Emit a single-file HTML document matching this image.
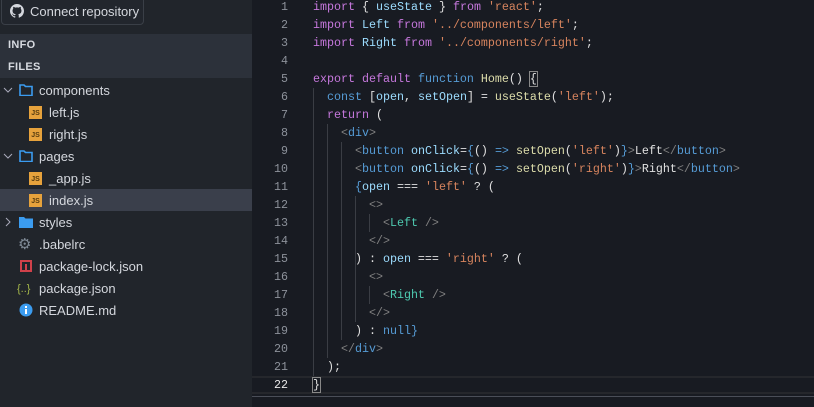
<!DOCTYPE html>
<html><head><meta charset="utf-8"><style>
*{margin:0;padding:0;box-sizing:border-box}
body{width:814px;height:407px;overflow:hidden;background:#181b22;font-family:"Liberation Sans",sans-serif;position:relative}
#side{position:absolute;left:0;top:0;width:252px;height:407px;background:#21252b}
.btn{position:absolute;left:1px;top:-4px;width:143px;height:29px;border:1px solid #3a3f47;border-radius:4px;background:#22262d;color:#d4d7dd;font-size:13px;line-height:29px;padding-left:28px}
.btn svg{position:absolute;left:8px;top:7px}
.hdr{position:absolute;left:0;width:252px;height:22px;background:#2c313a;color:#d7dae0;font-weight:bold;font-size:11px;line-height:22px;padding-left:8px;letter-spacing:.3px}
.row{position:absolute;left:0;width:252px;height:22px;color:#d4d7dd;font-size:13px;line-height:24px}
.row.sel{background:#3a3f4b}
.ic{position:absolute;top:4px}
.js{width:13px;height:13px;background:#e6a23c;color:#553b10;font-size:7px;font-weight:bold;line-height:16px;text-align:center;top:5px}
#ed{position:absolute;left:252px;top:0;width:562px;height:407px;font-family:"Liberation Mono",monospace;font-size:11.67px}
.ln{position:absolute;left:0;width:36px;text-align:right;color:#8d929b;height:18px;line-height:18px}
.cl{position:absolute;left:61px;white-space:pre;color:#e0e0e0;height:18px;line-height:18px}
.k{color:#c678dd}.s{color:#d7845e}.b{color:#569cd6}.v{color:#9cdcfe}.f{color:#dcdcaa}.t{color:#4ec9b0}.g{color:#808080}.w{color:#e8e8e8}
.guide{position:absolute;width:1px;background:#3a3d44}
</style></head><body>
<div id="side">
<div class="btn"><svg width="14" height="14" viewBox="0 0 16 16"><path fill="#d4d7dd" d="M8 0C3.580 0 0 3.58 0 8c0 3.54 2.29 6.53 5.47 7.59.4.07.55-.17.55-.38v-1.330c-2.23.48-2.7-1.07-2.7-1.07-.36-.92-.89-1.17-.89-1.17-.73-.5.05-.49.05-.49.8.06 1.23.83 1.23.83.71 1.22 1.87.87 2.33.66.07-.52.28-.87.51-1.07-1.78-.2-3.65-.89-3.65-3.95 0-.87.31-1.59.82-2.15-.08-.2-.36-1.02.08-2.12 0 0 .67-.21 2.2.82a7.6 7.6 0 0 1 4 0c1.53-1.04 2.2-.82 2.2-.82.44 1.1.16 1.92.08 2.12.51.56.82 1.27.82 2.15 0 3.07-1.87 3.75-3.65 3.95.29.25.54.73.54 1.48v2.2c0 .21.15.46.55.38A8 8 0 0 0 16 8c0-4.42-3.58-8-8-8z"/></svg>Connect repository</div>
<div class="hdr" style="top:34px">INFO</div>
<div class="hdr" style="top:56px">FILES</div>
<div class="row" style="top:79px"><svg class="ic" style="left:3px;top:8px" width="10" height="6"><path d="M1 1l4 4 4-4" stroke="#aab" fill="none"/></svg><svg class="ic" style="left:19px;top:5px" width="14" height="12"><path d="M1 1h4l1.5 1.5H13v9H1z" stroke="#3b9cf0" stroke-width="1.6" fill="none"/></svg><span style="position:absolute;left:39px">components</span></div>
<div class="row" style="top:101px"><div class="ic js" style="left:29px">JS</div><span style="position:absolute;left:49px">left.js</span></div>
<div class="row" style="top:123px"><div class="ic js" style="left:29px">JS</div><span style="position:absolute;left:49px">right.js</span></div>
<div class="row" style="top:145px"><svg class="ic" style="left:3px;top:8px" width="10" height="6"><path d="M1 1l4 4 4-4" stroke="#aab" fill="none"/></svg><svg class="ic" style="left:19px;top:5px" width="14" height="12"><path d="M1 1h4l1.5 1.5H13v9H1z" stroke="#3b9cf0" stroke-width="1.6" fill="none"/></svg><span style="position:absolute;left:39px">pages</span></div>
<div class="row" style="top:167px"><div class="ic js" style="left:29px">JS</div><span style="position:absolute;left:49px">_app.js</span></div>
<div class="row sel" style="top:189px"><div class="ic js" style="left:29px">JS</div><span style="position:absolute;left:49px">index.js</span></div>
<div class="row" style="top:211px"><svg class="ic" style="left:5px;top:6px" width="6" height="10"><path d="M1 1l4 4-4 4" stroke="#aab" fill="none"/></svg><svg class="ic" style="left:19px;top:5px" width="14" height="12"><path d="M0 1h5l1.5 1.5H14v9.5H0z" fill="#3b9cf0"/></svg><span style="position:absolute;left:39px">styles</span></div>
<div class="row" style="top:233px"><span class="ic" style="left:18px;top:0;color:#7f8a96;font-size:15px">⚙</span><span style="position:absolute;left:39px">.babelrc</span></div>
<div class="row" style="top:255px"><svg class="ic" style="left:20px;top:5px" width="12" height="12"><rect x="1" y="1" width="10" height="10" fill="none" stroke="#d0414a" stroke-width="2"/><rect x="5" y="4" width="2" height="6" fill="#d0414a"/></svg><span style="position:absolute;left:39px">package-lock.json</span></div>
<div class="row" style="top:277px"><span class="ic" style="left:17px;top:0;color:#a4b74a;font-size:11px">{..}</span><span style="position:absolute;left:39px">package.json</span></div>
<div class="row" style="top:299px"><svg class="ic" style="left:19px;top:4px" width="14" height="14"><circle cx="7" cy="7" r="6.5" fill="#3b9cf0"/><rect x="6" y="6" width="2" height="5" fill="#fff"/><rect x="6" y="3" width="2" height="2" fill="#fff"/></svg><span style="position:absolute;left:39px">README.md</span></div>
</div>
<div id="ed">
<div style="position:absolute;left:0;top:376px;width:562px;height:18px;border-top:2px solid #25272c;border-bottom:2px solid #25272c"></div>
<div style="position:absolute;left:0;top:396px;width:562px;height:1px;background:#4a4e58"></div>
<div class="guide" style="left:61px;top:88px;height:288px"></div>
<div class="guide" style="left:75px;top:124px;height:234px"></div>
<div class="guide" style="left:89px;top:142px;height:198px"></div>
<div class="guide" style="left:103px;top:196px;height:126px"></div>
<div class="guide" style="left:117px;top:214px;height:18px"></div>
<div class="guide" style="left:117px;top:286px;height:18px"></div>
<div class="ln" style="top:-2px">1</div><div class="cl" style="top:-2px"><span class="k">import</span> { <span class="v">useState</span> } <span class="k">from</span> <span class="s">'react'</span>;</div>
<div class="ln" style="top:16px">2</div><div class="cl" style="top:16px"><span class="k">import</span> <span class="v">Left</span> <span class="k">from</span> <span class="s">'../components/left'</span>;</div>
<div class="ln" style="top:34px">3</div><div class="cl" style="top:34px"><span class="k">import</span> <span class="v">Right</span> <span class="k">from</span> <span class="s">'../components/right'</span>;</div>
<div class="ln" style="top:52px">4</div>
<div class="ln" style="top:70px">5</div><div class="cl" style="top:70px"><span class="k">export</span> <span class="k">default</span> <span class="b">function</span> <span class="f">Home</span>() <span style="outline:1px solid #888">{</span></div>
<div class="ln" style="top:88px">6</div><div class="cl" style="top:88px">  <span class="b">const</span> [<span class="v">open</span>, <span class="v">setOpen</span>] = <span class="f">useState</span>(<span class="s">'left'</span>);</div>
<div class="ln" style="top:106px">7</div><div class="cl" style="top:106px">  <span class="k">return</span> (</div>
<div class="ln" style="top:124px">8</div><div class="cl" style="top:124px">    <span class="g">&lt;</span><span class="b">div</span><span class="g">&gt;</span></div>
<div class="ln" style="top:142px">9</div><div class="cl" style="top:142px">      <span class="g">&lt;</span><span class="b">button</span> <span class="v">onClick</span>=<span class="b">{</span>() <span class="b">=&gt;</span> <span class="f">setOpen</span>(<span class="s">'left'</span>)<span class="b">}</span><span class="g">&gt;</span>Left<span class="g">&lt;/</span><span class="b">button</span><span class="g">&gt;</span></div>
<div class="ln" style="top:160px">10</div><div class="cl" style="top:160px">      <span class="g">&lt;</span><span class="b">button</span> <span class="v">onClick</span>=<span class="b">{</span>() <span class="b">=&gt;</span> <span class="f">setOpen</span>(<span class="s">'right'</span>)<span class="b">}</span><span class="g">&gt;</span>Right<span class="g">&lt;/</span><span class="b">button</span><span class="g">&gt;</span></div>
<div class="ln" style="top:178px">11</div><div class="cl" style="top:178px">      <span class="b">{</span><span class="v">open</span> === <span class="s">'left'</span> ? (</div>
<div class="ln" style="top:196px">12</div><div class="cl" style="top:196px">        <span class="g">&lt;&gt;</span></div>
<div class="ln" style="top:214px">13</div><div class="cl" style="top:214px">          <span class="g">&lt;</span><span class="t">Left</span> <span class="g">/&gt;</span></div>
<div class="ln" style="top:232px">14</div><div class="cl" style="top:232px">        <span class="g">&lt;/&gt;</span></div>
<div class="ln" style="top:250px">15</div><div class="cl" style="top:250px">      ) : <span class="v">open</span> === <span class="s">'right'</span> ? (</div>
<div class="ln" style="top:268px">16</div><div class="cl" style="top:268px">        <span class="g">&lt;&gt;</span></div>
<div class="ln" style="top:286px">17</div><div class="cl" style="top:286px">          <span class="g">&lt;</span><span class="t">Right</span> <span class="g">/&gt;</span></div>
<div class="ln" style="top:304px">18</div><div class="cl" style="top:304px">        <span class="g">&lt;/&gt;</span></div>
<div class="ln" style="top:322px">19</div><div class="cl" style="top:322px">      ) : <span class="b">null</span><span class="b">}</span></div>
<div class="ln" style="top:340px">20</div><div class="cl" style="top:340px">    <span class="g">&lt;/</span><span class="b">div</span><span class="g">&gt;</span></div>
<div class="ln" style="top:358px">21</div><div class="cl" style="top:358px">  );</div>
<div class="ln w" style="top:376px">22</div><div class="cl" style="top:376px"><span style="outline:1px solid #888">}</span></div>
</div>
</body></html>
